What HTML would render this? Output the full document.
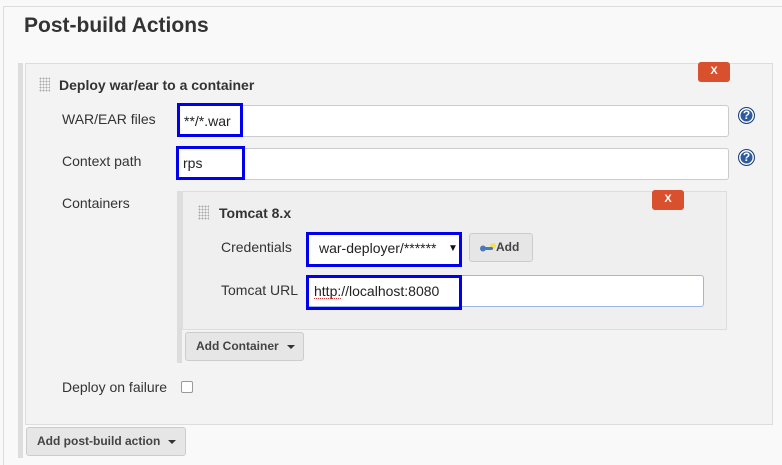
<!DOCTYPE html>
<html><head><style>
*{box-sizing:border-box;margin:0;padding:0}
body{width:782px;height:465px;background:#f9f9f9;font-family:"Liberation Sans",Arial,sans-serif;position:relative;overflow:hidden;color:#333}
.a{position:absolute}
.inp{position:absolute;background:#fff;border:1px solid #ccc;border-radius:3px}
.blue{position:absolute;border:3px solid #0000ee}
.lbl{position:absolute;font-size:14px;color:#333}
.btn{position:absolute;background:#e6e6e6;border:1px solid #ccc;border-radius:3px;font-size:12px;font-weight:bold;color:#444;padding-left:10px;line-height:26px}
.x{position:absolute;background:#d9502f;border-radius:3px;color:#fff;font-size:11px;font-weight:bold;text-align:center;line-height:19px}
.grip{position:absolute;width:11px;height:15px;background-image:radial-gradient(#aaa 0.8px,transparent 0.9px);background-size:3px 3px}
.help{position:absolute;width:17px;height:17px;border-radius:50%;background:#2d5aa0;border:1px solid #1d3f7a;color:#fff;font-size:12px;font-weight:bold;text-align:center;line-height:15px;box-shadow:inset 0 0 0 1.5px #fff}
.caret{display:inline-block;width:0;height:0;border-left:4px solid transparent;border-right:4px solid transparent;border-top:4px solid #333;margin-left:8px;vertical-align:middle}
</style></head><body>
<div class="a" style="left:3px;top:6px;width:779px;height:459px;border-left:1px solid #ddd;border-top:1px solid #ddd"></div>
<div class="a" style="left:24px;top:14px;font-size:21px;font-weight:bold;color:#333">Post-build Actions</div>
<div class="a" style="left:18px;top:63px;width:5px;height:395px;background:#ddd"></div>
<div class="a" style="left:25px;top:63px;width:748px;height:362px;background:#f3f3f3;border:1px solid #ddd"></div>
<div class="grip" style="left:39px;top:77px"></div>
<div class="a" style="left:59px;top:77px;font-size:14px;font-weight:bold;color:#333">Deploy war/ear to a container</div>
<div class="x" style="left:698px;top:62px;width:32px;height:20px">X</div>

<div class="lbl" style="left:62px;top:111px">WAR/EAR files</div>
<div class="inp" style="left:177px;top:105px;width:552px;height:32px"></div>
<div class="a" style="left:184px;top:113px;font-size:14px;color:#222">**/*.war</div>
<div class="blue" style="left:177px;top:103px;width:66px;height:34px"></div>
<div class="help" style="left:738px;top:107px">?</div>

<div class="lbl" style="left:62px;top:153px">Context path</div>
<div class="inp" style="left:177px;top:148px;width:552px;height:32px"></div>
<div class="a" style="left:183px;top:155px;font-size:14px;color:#222">rps</div>
<div class="blue" style="left:176px;top:146px;width:69px;height:34px"></div>
<div class="help" style="left:738px;top:149px">?</div>

<div class="lbl" style="left:62px;top:195px">Containers</div>
<div class="a" style="left:177px;top:191px;width:5px;height:172px;background:#ddd"></div>
<div class="a" style="left:182px;top:191px;width:545px;height:139px;background:#efefef;border:1px solid #ddd"></div>
<div class="grip" style="left:198px;top:205px"></div>
<div class="a" style="left:219px;top:205px;font-size:14px;font-weight:bold;color:#333">Tomcat 8.x</div>
<div class="x" style="left:652px;top:190px;width:32px;height:20px">X</div>

<div class="lbl" style="left:221px;top:239px">Credentials</div>
<div class="inp" style="left:306px;top:232px;width:155px;height:35px;border:none"></div>
<div class="a" style="left:319px;top:240px;font-size:14px;color:#222">war-deployer/******</div>
<div class="a" style="left:448px;top:243px;font-size:10px;color:#111">▼</div>
<div class="blue" style="left:306px;top:232px;width:156px;height:35px"></div>
<div class="btn" style="left:469px;top:233px;width:64px;height:29px;padding-left:10px">
<svg width="18" height="10" style="vertical-align:middle"><circle cx="13" cy="3" r="3" fill="#f0e060"/><rect x="1" y="4" width="12" height="3" rx="1.5" fill="#4a78b8"/><circle cx="3" cy="5.5" r="3" fill="#4a78b8"/></svg><span style="margin-left:-2px">Add</span></div>

<div class="lbl" style="left:221px;top:282px">Tomcat URL</div>
<div class="inp" style="left:306px;top:275px;width:398px;height:32px;border-color:#9ab8e0"></div>
<div class="a" style="left:314px;top:283px;font-size:14px;color:#222">http://localhost:8080</div>
<div class="a" style="left:314px;top:298px;width:27px;border-bottom:1px dotted #d33"></div>
<div class="blue" style="left:306px;top:275px;width:156px;height:35px"></div>

<div class="btn" style="left:185px;top:332px;width:119px;height:29px">Add Container<span class="caret"></span></div>

<div class="lbl" style="left:62px;top:379px">Deploy on failure</div>
<div class="a" style="left:181px;top:381px;width:12px;height:12px;border:1px solid #999;border-radius:2px;background:#fff"></div>

<div class="btn" style="left:26px;top:427px;width:160px;height:29px">Add post-build action<span class="caret"></span></div>
</body></html>
